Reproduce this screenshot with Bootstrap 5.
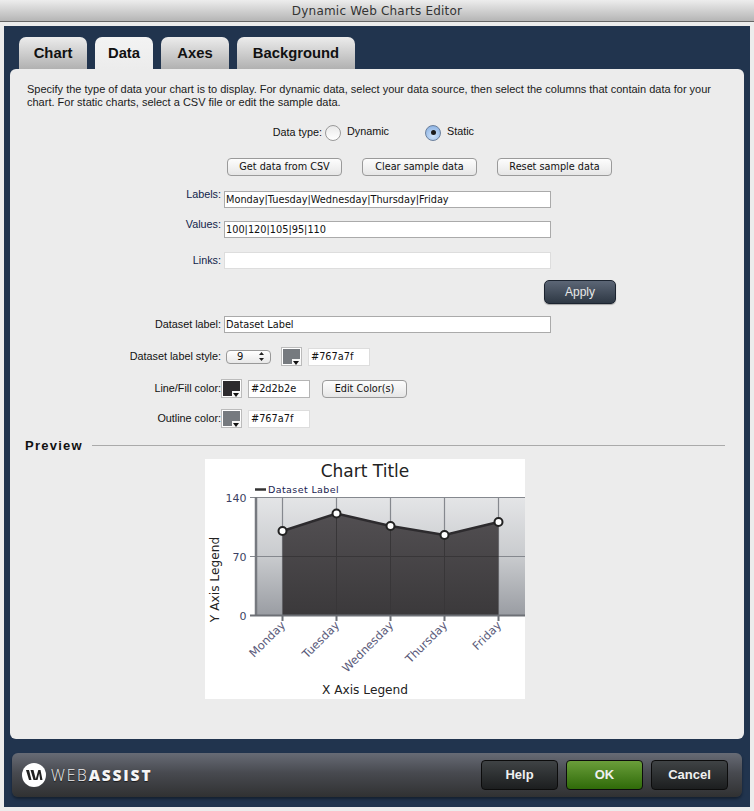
<!DOCTYPE html>
<html lang="en">
<head>
<meta charset="utf-8">
<title>Dynamic Web Charts Editor</title>
<link href="https://cdn.jsdelivr.net/npm/bootstrap@5.3.0/dist/css/bootstrap.min.css" rel="stylesheet">
<style>
html,body{height:811px;overflow:hidden}
body{background:#ececec;font-family:"Liberation Sans",Arial,sans-serif;font-size:11px;line-height:13px;color:#111}
.ttl{height:22px;background:linear-gradient(#ededed,#b5b5b5);border-bottom:1px solid #666;margin-bottom:4px;line-height:22px;color:#333;font-family:"DejaVu Sans",sans-serif;font-size:12px;letter-spacing:.2px}
.frame{height:781px;margin:0 4px;background:#21344e;padding:11px 6px 0}
.tabset{height:32px;padding-left:9px;gap:8px;border:0;flex-wrap:nowrap}
.tabset .nav-link{height:32px;padding:0;border:0;border-radius:7px 7px 0 0;background:linear-gradient(#ececec,#b1b1b1);color:#111;font-weight:700;font-size:14.8px;line-height:32px;text-align:center}
.tabset .nav-link.active{background:linear-gradient(#f3f3f3,#ececec);color:#111}
.tw1{width:68px}.tw2{width:58px}.tw3{width:68px}.tw4{width:118px}
.pane{height:670px;background:#ececec;border-radius:6px;padding:14px 19px 0 15px}
.desc{padding-left:2px;height:26px;color:#1a1a1a}
.rw{display:flex;align-items:center}
.lab{width:196px;text-align:right;flex:none;margin-right:3px;white-space:nowrap;font-size:10.8px}
.lab-navy{color:#101d4a}
.lab-up{align-self:flex-start;margin-top:-3px}
.fld{height:17px;width:327px;border:1px solid #aaa;background:#fff;border-radius:0;padding:0 1px;font-family:"DejaVu Sans",sans-serif;font-size:9.75px;line-height:15px;color:#111;box-shadow:none}
.fld.dim{border-color:#ddd}
.hex{width:62px;height:18px;border-color:#ddd;padding:0 2px}
.hex.strong{border-color:#b5b5b5}
.mbtn{height:18px;padding:0;background:linear-gradient(#fdfdfd,#e6e6e6);border:1px solid #9a9a9a;border-radius:4px;font-family:"DejaVu Sans",sans-serif;font-size:9.7px;line-height:16px;color:#111}
.bw{width:115px}
.ew{width:85px;margin-left:12px}
.r0{margin-top:15px;height:17px}
.r1{margin-top:17px;padding-left:202px;gap:20px}
.r2{margin-top:15px}.r3{margin-top:13px}.r4{margin-top:14px}
.r5{margin-top:11px;padding-left:519px}
.r6{margin-top:12px}.r7{margin-top:14px}.r8{margin-top:13px}.r9{margin-top:11px}
.dtl{width:297px;text-align:right;margin-right:3px;flex:none;font-size:10.8px}
.opt{margin-left:6px;font-size:10.8px;margin-top:-2px}
.opt-w{width:78px}
.radio{width:16px;height:16px;border-radius:50%;border:1px solid #999;background:linear-gradient(#e9e9e9,#fff);flex:none;display:flex;align-items:center;justify-content:center}
.radio.on{background:radial-gradient(circle at 50% 70%,#cfe3fa,#7fa9de);border-color:#6a7f9c}
.radio.on i{width:5px;height:5px;border-radius:50%;background:#1b1b1b}
.applyb{width:72px;height:24px;padding:0;background:linear-gradient(#5c6676,#2e3844);border:1px solid #1c2430;border-radius:5px;color:#e8e8e8;font-size:12px;line-height:22px;font-family:"Liberation Sans",sans-serif;box-shadow:0 1px 1px rgba(0,0,0,.3)}
.applyb:hover{background:linear-gradient(#5c6676,#2e3844);color:#e8e8e8}
.spin{width:45px;height:14px;margin-left:5px;margin-right:10px;background:linear-gradient(#fff,#e8e8e8);border:1px solid #999;border-radius:4px;padding:0 6px;font-family:"DejaVu Sans",sans-serif;font-size:10px;line-height:12px;justify-content:space-between}
.spin svg{align-self:center}
.swatch{width:21px;height:19px;background:#fff;border:1px solid #bbb;flex:none;padding:1px;position:relative;margin-right:6px}
.swatch b{display:block;width:100%;height:100%}
.c-g{background:#767a7f}.c-d{background:#2d2b2e}
.swatch s{position:absolute;right:0;bottom:0;width:9px;height:6px;background:#f7f7f7}
.swatch s::after{content:"";position:absolute;left:1px;top:2px;border-left:3.5px solid transparent;border-right:3.5px solid transparent;border-top:4px solid #111}
.prev{margin-top:9px;height:16px;gap:9px}
.prev strong{font-size:13px;letter-spacing:1.25px;color:#111}
.prev span{flex:1;height:1px;background:#aaa}
.chartbox{margin:6px 0 0 180px;width:320px;height:240px;display:block;background:#fff}
.chartbox text{font-family:"DejaVu Sans",sans-serif}
.foot{height:44px;margin:14px 2px 0;border-radius:6px;background:linear-gradient(#676b75,#484a50 45%,#303132);box-shadow:0 2px 3px rgba(0,0,0,.4);padding:0 14px 0 9px}
.brand{color:#eee;font-size:15.5px;line-height:16px;font-family:"Open Sans",sans-serif;letter-spacing:1.85px;text-shadow:0 1px 1px rgba(0,0,0,.6)}
.brand span{font-weight:300}
.brand strong{font-weight:800;color:#f5f5f5}
.dbtn{width:77px;height:30px;padding:0;background:linear-gradient(#3f4345,#1c1e1f);border:1px solid #0c0c0c;border-radius:4px;color:#f0f0f0;font-weight:700;font-size:13px;line-height:28px}
.dbtn:hover{background:linear-gradient(#3f4345,#1c1e1f);color:#f0f0f0}
.dbtn.go{background:linear-gradient(#6a9e3a,#2f6a09)}
.dbtn.go:hover{background:linear-gradient(#6a9e3a,#2f6a09)}
</style>
</head>
<body>
<div class="ttl text-center">Dynamic Web Charts Editor</div>
<div class="frame">
  <ul class="nav tabset">
    <li class="nav-item"><a class="nav-link tw1" href="#">Chart</a></li>
    <li class="nav-item"><a class="nav-link active tw2" href="#">Data</a></li>
    <li class="nav-item"><a class="nav-link tw3" href="#">Axes</a></li>
    <li class="nav-item"><a class="nav-link tw4" href="#">Background</a></li>
  </ul>
  <div class="pane">
    <p class="desc m-0">Specify the type of data your chart is to display. For dynamic data, select your data source, then select the columns that contain data for your chart. For static charts, select a CSV file or edit the sample data.</p>
    <div class="rw r0">
      <span class="dtl">Data type:</span>
      <span class="radio"></span><span class="opt opt-w">Dynamic</span>
      <span class="radio on"><i></i></span><span class="opt">Static</span>
    </div>
    <div class="rw r1">
      <button class="btn mbtn bw">Get data from CSV</button>
      <button class="btn mbtn bw">Clear sample data</button>
      <button class="btn mbtn bw">Reset sample data</button>
    </div>
    <div class="rw r2"><label class="lab lab-navy lab-up">Labels:</label><input class="form-control fld" value="Monday|Tuesday|Wednesday|Thursday|Friday"></div>
    <div class="rw r3"><label class="lab lab-navy lab-up">Values:</label><input class="form-control fld" value="100|120|105|95|110"></div>
    <div class="rw r4"><label class="lab lab-navy">Links:</label><input class="form-control fld dim" value=""></div>
    <div class="rw r5"><button class="btn applyb">Apply</button></div>
    <div class="rw r6"><label class="lab">Dataset label:</label><input class="form-control fld" value="Dataset Label"></div>
    <div class="rw r7">
      <label class="lab m-0">Dataset label style:</label>
      <div class="d-flex spin"><span class="ms-1">9</span><svg width="5" height="9" viewBox="0 0 5 9"><path d="M2.5 0 5 3H0zM0 6h5L2.5 9z" fill="#222"/></svg></div>
      <span class="swatch"><b class="c-g"></b><s></s></span>
      <input class="form-control fld hex" value="#767a7f">
    </div>
    <div class="rw r8">
      <label class="lab m-0">Line/Fill color:</label>
      <span class="swatch"><b class="c-d"></b><s></s></span>
      <input class="form-control fld hex strong" value="#2d2b2e">
      <button class="btn mbtn ew">Edit Color(s)</button>
    </div>
    <div class="rw r9">
      <label class="lab m-0">Outline color:</label>
      <span class="swatch"><b class="c-g"></b><s></s></span>
      <input class="form-control fld hex" value="#767a7f">
    </div>
    <div class="rw prev"><strong>Preview</strong><span></span></div>
    <svg class="chartbox" viewBox="0 0 320 240" width="320" height="240">
      <defs>
        <linearGradient id="bg" x1="0" y1="0" x2="0" y2="1"><stop offset="0" stop-color="#e4e5e7"/><stop offset=".5" stop-color="#c9cbce"/><stop offset="1" stop-color="#9a9da3"/></linearGradient>
        <linearGradient id="ar" x1="0" y1="0" x2="0" y2="1"><stop offset="0" stop-color="#524f52"/><stop offset="1" stop-color="#3b393b"/></linearGradient>
      </defs>
      <text x="160" y="18" text-anchor="middle" font-size="17" fill="#222">Chart Title</text>
      <path d="M50 30.5h11" stroke="#333" stroke-width="2.5"/>
      <text x="63" y="34" font-size="9.5" letter-spacing=".4" fill="#1a2250">Dataset Label</text>
      <rect x="51" y="38.5" width="269" height="117.5" fill="url(#bg)"/>
      <path d="M77.5 38.5V156M131.5 38.5V156M185.5 38.5V156M239.5 38.5V156M293.5 38.5V156M45 38.5H320M45 97.5H320" stroke="#85888e" stroke-width="1.2" fill="none"/>
      <path d="M77.5 72 131.5 54.5 185.5 67 239.5 76 293.5 63V156H77.5Z" fill="url(#ar)"/>
      <path d="M131.5 54.5V156M185.5 67V156M239.5 76V156M77.5 97.5H293.5" stroke="#383638" stroke-width="1" fill="none"/>
      <path d="M77.5 72 131.5 54.5 185.5 67 239.5 76 293.5 63" stroke="#2d2b2e" stroke-width="2.5" fill="none"/>
      <path d="M51 38V156" stroke="#76797f" stroke-width="2.5"/>
      <path d="M45 156.5H320" stroke="#6d7076" stroke-width="2"/>
      <path d="M77.5 157v5M131.5 157v5M185.5 157v5M239.5 157v5M293.5 157v5" stroke="#6d7076" stroke-width="2"/>
      <g fill="#fff" stroke="#222" stroke-width="2">
        <circle cx="77.5" cy="72" r="4"/><circle cx="131.5" cy="54.5" r="4"/><circle cx="185.5" cy="67" r="4"/><circle cx="239.5" cy="76" r="4"/><circle cx="293.5" cy="63" r="4"/>
      </g>
      <g font-size="11" fill="#3b3f63" text-anchor="end">
        <text x="41.5" y="42.5">140</text><text x="41.5" y="101.5">70</text><text x="41.5" y="160.5">0</text>
      </g>
      <g font-size="11.5" fill="#5a5a7a" text-anchor="end">
        <text transform="translate(81 167) rotate(-45)">Monday</text>
        <text transform="translate(135 167) rotate(-45)">Tuesday</text>
        <text transform="translate(189 167) rotate(-45)">Wednesday</text>
        <text transform="translate(243 167) rotate(-45)">Thursday</text>
        <text transform="translate(297 167) rotate(-45)">Friday</text>
      </g>
      <text x="160" y="235" text-anchor="middle" font-size="12.2" fill="#222">X Axis Legend</text>
      <text transform="translate(14 120.5) rotate(-90)" text-anchor="middle" font-size="12.2" fill="#222">Y Axis Legend</text>
    </svg>
  </div>
  <div class="foot d-flex align-items-center justify-content-between">
    <div class="d-flex align-items-center gap-1">
      <svg width="26" height="26" viewBox="0 0 26 26"><circle cx="13" cy="13" r="12" fill="#fff"/><path d="M5 8h3l2.5 10H8zM9.5 8h3l2.5 10h-2.5zM14.5 18l2.8-10h2.2l2 10h-2.3l-1-6.5-1.7 6.5z" fill="#222"/></svg>
      <div class="brand"><span>WEB</span><strong>ASSIST</strong></div>
    </div>
    <div class="d-flex gap-2">
      <button class="btn dbtn">Help</button>
      <button class="btn dbtn go">OK</button>
      <button class="btn dbtn">Cancel</button>
    </div>
  </div>
</div>
<script src="https://cdn.jsdelivr.net/npm/bootstrap@5.3.0/dist/js/bootstrap.bundle.min.js"></script>
</body>
</html>
